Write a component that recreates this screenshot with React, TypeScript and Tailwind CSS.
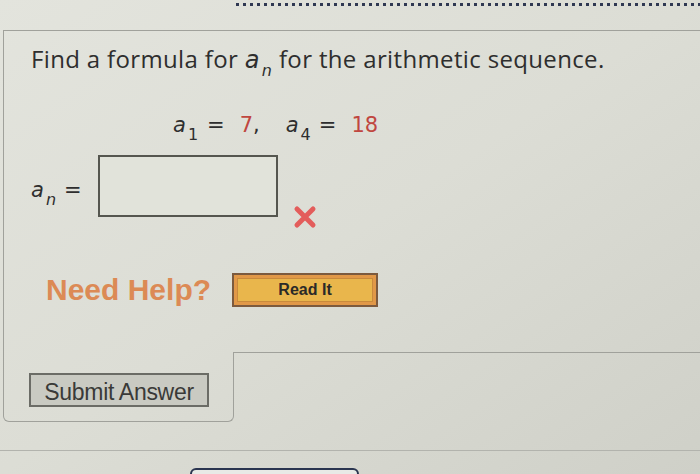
import React from 'react';

const mathFont = "font-['DejaVu_Sans',sans-serif]";

const Sub: React.FC<{ children: React.ReactNode; className?: string }> = ({ children, className = '' }) => (
    <span className={`relative top-[8px] ml-[2px] text-[16px] ${className}`}>{children}</span>
);

const WrongMark: React.FC = () => (
    <svg width="26" height="26" viewBox="0 0 26 26" className="mt-[49px] ml-[14px]">
        <path d="M5 5 L21 21 M21 5 L5 21" stroke="#e35d5b" strokeWidth="5" strokeLinecap="round" />
    </svg>
);

const App: React.FC = () => {
    return (
        <div className="relative h-[474px] w-[700px] overflow-hidden bg-linear-to-br from-[#e3e4dd] via-[#dcddd5] to-[#cfd0c8] font-['Open_Sans',sans-serif] text-[#2e2e2e]">
            {/* dotted rule under the page header */}
            <div className="h-[30px] pt-[3px]">
                <div className="ml-[236px] h-[3px] bg-[repeating-linear-gradient(90deg,#2f3852_0_3px,transparent_3px_7px)]" />
            </div>

            {/* question box */}
            <div className="ml-[3px] h-[322px] border-t border-l border-[#a0a19b] pl-[27px]">
                <p className="mt-[12px] text-[24px] leading-[32px] tracking-[0.35px]">
                    Find a formula for{' '}
                    <span className={`${mathFont} italic`}>
                        a<Sub>n</Sub>
                    </span>{' '}
                    for the arithmetic sequence.
                </p>

                <div className={`${mathFont} mt-[32px] ml-[142px] text-[21px] leading-[28px]`}>
                    <span className="italic">a</span>
                    <Sub>1</Sub>
                    <span className="ml-[9px]">=</span>
                    <span className="ml-[15px] text-[#c0463f]">7</span>,
                    <span className="ml-[26px] italic">a</span>
                    <Sub>4</Sub>
                    <span className="ml-[8px]">=</span>
                    <span className="ml-[15px] text-[#c0463f]">18</span>
                </div>

                <div className="mt-[14px] flex items-start">
                    <div className={`${mathFont} mt-[21px] w-[67px] text-[21px] leading-[28px]`}>
                        <span className="italic">a</span>
                        <Sub className="italic">n</Sub>
                        <span className="ml-[8px]">=</span>
                    </div>
                    <div className="h-[62px] w-[180px] border-2 border-[#55564f] bg-[#e1e3da]" />
                    <WrongMark />
                </div>

                <div className="mt-[37px] flex items-center">
                    <span className="ml-[15px] font-['Liberation_Sans',sans-serif] text-[30px] font-bold text-[#dc8a55]">
                        Need Help?
                    </span>
                    <button className="ml-[21px] h-[34px] w-[146px] border-2 border-[#7c5a3e] bg-[#e19848] p-[3px]">
                        <span className="flex h-full w-full items-center justify-center border border-[#c98a3c] bg-[#e9b64c] font-['Liberation_Sans',sans-serif] text-[16px] font-bold text-[#2b2a28]">
                            Read It
                        </span>
                    </button>
                </div>
            </div>

            {/* submit area */}
            <div className="flex">
                <div className="ml-[3px] h-[70px] w-[231px] rounded-b-[6px] border-r border-b border-l border-[#a0a19b] pt-[21px] pl-[25px]">
                    <button className="h-[34px] w-[180px] border-2 border-[#6b6c66] bg-[#c9cac2] font-['Liberation_Sans',sans-serif] text-[23px] tracking-[-0.3px] text-[#3a3a38]">
                        Submit Answer
                    </button>
                </div>
                <div className="flex-1 border-t border-[#a0a19b]" />
            </div>

            {/* footer */}
            <div className="mt-[28px] border-t border-[#b2b3ad] pt-[17px]">
                <div className="ml-[190px] h-[20px] w-[169px] rounded-t-[6px] border-2 border-[#2a3550] bg-[#e8eae6]" />
            </div>
        </div>
    );
};

export default App;
